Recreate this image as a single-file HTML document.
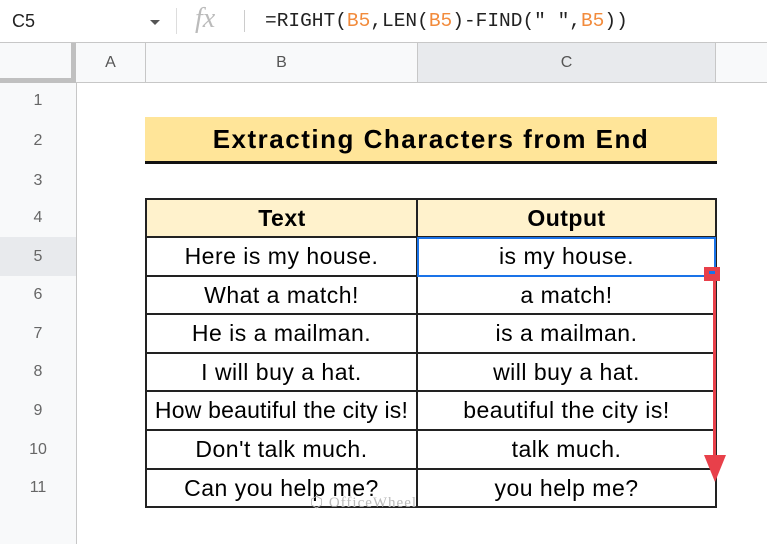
<!DOCTYPE html><html><head><style>
body{margin:0;width:767px;height:544px;overflow:hidden;background:#fff;font-family:"Liberation Sans",Arial,sans-serif;position:relative}
.a{position:absolute;box-sizing:border-box}
.rh{position:absolute;left:0;width:76px;background:#f8f9fa;border-bottom:1px solid #c7c7c7;color:#666;font-size:16px;display:flex;align-items:center;justify-content:center}
.ch{position:absolute;top:43px;height:40px;background:#f8f9fa;border-right:1px solid #c7c7c7;border-bottom:1px solid #c7c7c7;color:#555;font-size:16px;display:flex;align-items:center;justify-content:center;box-sizing:border-box}
.c{position:absolute;display:flex;align-items:center;justify-content:center;font-size:23px;letter-spacing:0.5px;color:#000;box-sizing:border-box;white-space:nowrap}
</style></head><body>
<div class="a" style="left:0;top:0;width:767px;height:43px;border-bottom:1px solid #c7c7c7;background:#fff"></div>
<div class="a" style="left:12px;top:11px;font-size:18px;color:#222">C5</div>
<div class="a" style="left:150px;top:20px;width:0;height:0;border-left:5px solid transparent;border-right:5px solid transparent;border-top:5px solid #555"></div>
<div class="a" style="left:176px;top:8px;width:1px;height:26px;background:#ddd"></div>
<div class="a" style="left:195px;top:3px;font-family:'Liberation Serif',serif;font-style:italic;font-size:28px;color:#bbb">fx</div>
<div class="a" style="left:244px;top:10px;width:1px;height:22px;background:#ccc"></div>
<div class="a" style="left:265px;top:10px;font-size:19.5px;color:#222;font-family:'Liberation Mono',monospace">=RIGHT(<span style="color:#f28b3c">B5</span>,LEN(<span style="color:#f28b3c">B5</span>)-FIND(" ",<span style="color:#f28b3c">B5</span>))</div>
<div class="a" style="left:0;top:43px;width:76px;height:40px;background:#f8f9fa;border-right:5px solid #c0c0c0;border-bottom:5px solid #c0c0c0"></div>
<div class="ch" style="left:76px;width:70px">A</div>
<div class="ch" style="left:146px;width:272px">B</div>
<div class="ch" style="left:418px;width:298px;background:#e8eaed">C</div>
<div class="ch" style="left:716px;width:51px;border-right:none"></div>
<div class="a" style="left:76px;top:83px;width:1px;height:461px;background:#c7c7c7"></div>
<div class="rh" style="top:83px;height:35px">1</div>
<div class="rh" style="top:118px;height:45px">2</div>
<div class="rh" style="top:163px;height:35px">3</div>
<div class="rh" style="top:198px;height:39px">4</div>
<div class="rh" style="top:237px;height:39px;background:#e8eaed">5</div>
<div class="rh" style="top:276px;height:38px">6</div>
<div class="rh" style="top:314px;height:39px">7</div>
<div class="rh" style="top:353px;height:38px">8</div>
<div class="rh" style="top:391px;height:39px">9</div>
<div class="rh" style="top:430px;height:39px">10</div>
<div class="rh" style="top:469px;height:38px">11</div>
<div class="rh" style="top:507px;height:37px;border-bottom:none"></div>
<div class="c" style="left:145px;top:117px;width:572px;height:47px;background:#ffe599;border-bottom:3px solid #111;font-weight:bold;font-size:26px;letter-spacing:1.5px">Extracting Characters from End</div>
<div class="a" style="left:145px;top:198px;width:572px;height:310px;border:2px solid #222"></div>
<div class="c" style="left:147px;top:200px;width:270px;height:37px;background:#fff2cc;font-weight:bold">Text</div>
<div class="c" style="left:418px;top:200px;width:297px;height:37px;background:#fff2cc;font-weight:bold">Output</div>
<div class="a" style="left:416px;top:198px;width:2px;height:310px;background:#222"></div>
<div class="a" style="left:145px;top:236px;width:572px;height:2px;background:#222"></div>
<div class="a" style="left:145px;top:275px;width:572px;height:2px;background:#222"></div>
<div class="a" style="left:145px;top:313px;width:572px;height:2px;background:#222"></div>
<div class="a" style="left:145px;top:352px;width:572px;height:2px;background:#222"></div>
<div class="a" style="left:145px;top:390px;width:572px;height:2px;background:#222"></div>
<div class="a" style="left:145px;top:429px;width:572px;height:2px;background:#222"></div>
<div class="a" style="left:145px;top:468px;width:572px;height:2px;background:#222"></div>
<div class="c" style="left:147px;top:238px;width:269px;height:37px">Here is my house.</div>
<div class="c" style="left:147px;top:277px;width:269px;height:36px">What a match!</div>
<div class="c" style="left:147px;top:315px;width:269px;height:37px">He is a mailman.</div>
<div class="c" style="left:147px;top:354px;width:269px;height:36px">I will buy a hat.</div>
<div class="c" style="left:147px;top:392px;width:269px;height:37px;letter-spacing:0.2px">How beautiful the city is!</div>
<div class="c" style="left:147px;top:431px;width:269px;height:37px">Don't talk much.</div>
<div class="c" style="left:147px;top:470px;width:269px;height:36px">Can you help me?</div>
<div class="c" style="left:418px;top:238px;width:297px;height:37px">is my house.</div>
<div class="c" style="left:418px;top:277px;width:297px;height:36px">a match!</div>
<div class="c" style="left:418px;top:315px;width:297px;height:37px">is a mailman.</div>
<div class="c" style="left:418px;top:354px;width:297px;height:36px">will buy a hat.</div>
<div class="c" style="left:418px;top:392px;width:297px;height:37px">beautiful the city is!</div>
<div class="c" style="left:418px;top:431px;width:297px;height:37px">talk much.</div>
<div class="c" style="left:418px;top:470px;width:297px;height:36px">you help me?</div>
<div class="a" style="left:417px;top:237px;width:299px;height:40px;border:2px solid #1a73e8"></div>
<div class="a" style="left:704px;top:267px;width:16px;height:14px;background:#e8404a"></div>
<div class="a" style="left:709px;top:271px;width:6px;height:3px;background:#1a73e8"></div>
<div class="a" style="left:713px;top:280px;width:3px;height:178px;background:#e8404a"></div>
<svg class="a" style="left:704px;top:455px" width="22" height="28"><polygon points="0,0 22,0 11,27" fill="#e8404a"/></svg>
<div class="a" style="left:310px;top:493px;font-family:'Liberation Serif',serif;font-size:15px;color:#bbb;letter-spacing:1px">⬡ OfficeWheel</div>
</body></html>
